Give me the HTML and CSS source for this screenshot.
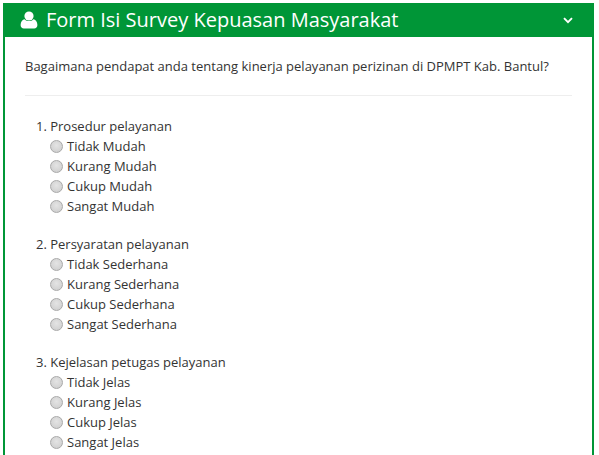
FILE: index.html
```html
<!DOCTYPE html>
<html lang="en">
<head>
	<meta charset="UTF-8">
	<title>Form Isi Survey</title>
	<link rel="stylesheet" href="styles.css">
</head>
<body>
	<div class="panel">
		<div class="panel-head">
			<svg class="icon-user" viewBox="0 0 18 18"><circle cx="9" cy="5" r="4.6" fill="#fff"/><path d="M0.6 14 C0.6 10.5 2.5 8.6 4.6 8.2 C6 9.6 7.4 10.1 9 10.1 C10.6 10.1 12 9.6 13.4 8.2 C15.5 8.6 17.4 10.5 17.4 14 C17.4 16.2 16 17.4 14.2 17.4 L3.8 17.4 C2 17.4 0.6 16.2 0.6 14 Z" fill="#fff"/></svg>
			<h1 class="panel-title">Form Isi Survey Kepuasan Masyarakat</h1>
			<svg class="icon-chevron" viewBox="0 0 10 7"><path d="M1 1.2 L5 5.2 L9 1.2" fill="none" stroke="#fff" stroke-width="1.9"/></svg>
		</div>
		<div class="panel-body">
			<p class="lead">Bagaimana pendapat anda tentang kinerja pelayanan perizinan di DPMPT Kab. Bantul?</p>
			<hr class="divider">

			<div class="question">
				<div class="question-title">1. Prosedur pelayanan</div>
				<label class="option"><span class="radio"></span>Tidak Mudah</label>
				<label class="option"><span class="radio"></span>Kurang Mudah</label>
				<label class="option"><span class="radio"></span>Cukup Mudah</label>
				<label class="option"><span class="radio"></span>Sangat Mudah</label>
			</div>

			<div class="question">
				<div class="question-title">2. Persyaratan pelayanan</div>
				<label class="option"><span class="radio"></span>Tidak Sederhana</label>
				<label class="option"><span class="radio"></span>Kurang Sederhana</label>
				<label class="option"><span class="radio"></span>Cukup Sederhana</label>
				<label class="option"><span class="radio"></span>Sangat Sederhana</label>
			</div>

			<div class="question">
				<div class="question-title">3. Kejelasan petugas pelayanan</div>
				<label class="option"><span class="radio"></span>Tidak Jelas</label>
				<label class="option"><span class="radio"></span>Kurang Jelas</label>
				<label class="option"><span class="radio"></span>Cukup Jelas</label>
				<label class="option"><span class="radio"></span>Sangat Jelas</label>
			</div>
		</div>
	</div>
</body>
</html>
```

FILE: styles.css
```css
html, body {
	height: 100%;
	overflow: hidden;
}
body {
	margin: 0;
	background: #fff;
	font-family: "Open Sans", sans-serif;
	font-size: 13px;
	line-height: 20px;
	color: #333;
}
.panel {
	margin: 3px 5px 0 3px;
	border: solid #009637;
	border-width: 0 2px;
	min-height: 452px;
}
.panel-head {
	display: flex;
	align-items: center;
	height: 34px;
	padding: 0 19px 0 15px;
	background: #009637;
	color: #fff;
}
.icon-user {
	width: 18px;
	height: 18px;
	margin-right: 8px;
}
.panel-title {
	flex: 1;
	margin: 0;
	font-size: 20px;
	font-weight: 400;
	line-height: 28px;
}
.icon-chevron {
	width: 10px;
	height: 7px;
}
.panel-body {
	padding: 19px 20px 0;
}
.lead {
	margin: 0;
	line-height: 20px;
}
.divider {
	margin: 19px 0 20px;
	border: 0;
	border-top: 1px solid #eee;
}
.question {
	margin-bottom: 18px;
	padding-left: 11px;
}
.question-title {
	height: 20px;
}
.option {
	display: flex;
	align-items: center;
	height: 20px;
	padding-left: 14px;
}
.radio {
	width: 13px;
	height: 13px;
	margin-right: 4px;
	border-radius: 50%;
	border: 1px solid #a9a9a9;
	background: radial-gradient(circle at 50% 40%, #e4e4e4, #cbcbcb);
	box-sizing: border-box;
}
```
